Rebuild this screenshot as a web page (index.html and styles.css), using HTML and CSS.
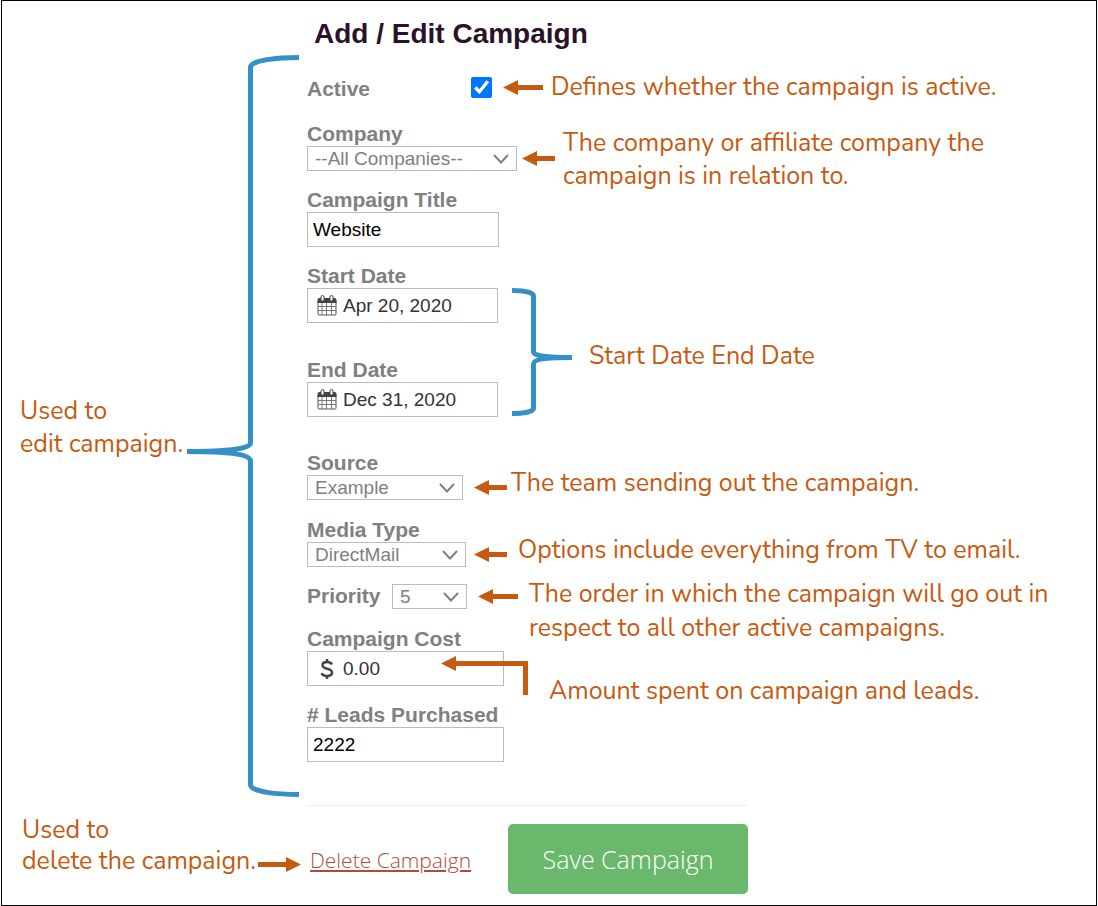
FILE: index.html
```html
<!DOCTYPE html>
<html lang="en">
<head>
<meta charset="utf-8">
<title>Add / Edit Campaign</title>
<link rel="stylesheet" href="styles.css">
</head>
<body>
<svg class="defs" aria-hidden="true">
  <symbol id="calendar" viewBox="0 0 20 21">
    <path d="M1 6V19Q1 20 2 20H18Q19 20 19 19V6Z" fill="none" stroke="#555" stroke-width="1"/>
    <path d="M.5 8V5Q.5 3 2.500 3H17.500Q19.500 3 19.500 5V8Z" fill="#444"/>
    <path d="M5 8V20M9.500 8V20M14.500 8V20M1 11.500H19M1 15.500H19" stroke="#777" stroke-width="1"/>
    <rect x="4" y=".5" width="3" height="5.500" rx="1.500" fill="#fff" stroke="#444"/>
    <rect x="13" y=".5" width="3" height="5.500" rx="1.500" fill="#fff" stroke="#444"/>
  </symbol>
</svg>
<form class="page">
  <h1 class="title">Add / Edit Campaign</h1>

  <div class="edit">
    <p class="note edit-note">Used to<br>edit campaign.</p>
    <svg class="brace" viewBox="0 0 112 742" preserveAspectRatio="none" aria-hidden="true">
      <path d="M112 2.500C92 2.500 63.500 5 63.500 12V388C63.500 394 40 396.500 0 396.500C40 396.500 63.500 399 63.500 406V730C63.500 737 92 739.500 112 739.500"/>
    </svg>

    <div class="fields">
      <div class="row active-row">
        <div class="active-field">
          <label for="active">Active</label>
          <input type="checkbox" id="active" class="check" checked>
        </div>
        <svg class="arrow long gap-l" viewBox="0 0 40 15" aria-hidden="true"><path d="M0 7.500L15 0V5H40V10H15V15Z"/></svg>
        <p class="note note-s">Defines whether the campaign is active.</p>
      </div>

      <div class="row">
        <div class="field">
          <label for="company">Company</label>
          <select id="company" class="select w-company"><option>--All Companies--</option></select>
        </div>
        <svg class="arrow gap-s" viewBox="0 0 33 15" aria-hidden="true"><path d="M0 7.500L15 0V5H33V10H15V15Z"/></svg>
        <p class="note note-s hang">The company or affiliate company the<br>campaign is in relation to.</p>
      </div>

      <div class="row">
        <div class="field">
          <label for="ctitle">Campaign Title</label>
          <input id="ctitle" class="box w-text" value="Website">
        </div>
      </div>

      <div class="dates">
        <div class="date-fields">
          <div class="field">
            <label for="start">Start Date</label>
            <div class="box icon-box w-date">
              <svg class="cal" aria-hidden="true"><use href="#calendar"/></svg>
              <input id="start" value="Apr 20, 2020">
            </div>
          </div>
          <div class="field">
            <label for="end">End Date</label>
            <div class="box icon-box w-date">
              <svg class="cal" aria-hidden="true"><use href="#calendar"/></svg>
              <input id="end" value="Dec 31, 2020">
            </div>
          </div>
        </div>
        <div class="dates-callout">
          <svg class="date-brace" viewBox="0 0 60 129" aria-hidden="true">
            <path d="M0 2.500C12 2.500 21.500 4 21.500 8V64C21.500 68 35 69.500 60 69.500C35 69.500 21.500 71 21.500 76V120C21.500 124 12 125.500 0 125.500"/>
          </svg>
          <p class="note">Start Date End Date</p>
        </div>
      </div>

      <div class="row">
        <div class="field">
          <label for="source">Source</label>
          <select id="source" class="select w-source"><option>Example</option></select>
        </div>
        <svg class="arrow gap-l" viewBox="0 0 33 15" aria-hidden="true"><path d="M0 7.500L15 0V5H33V10H15V15Z"/></svg>
        <p class="note note-xs">The team sending out the campaign.</p>
      </div>

      <div class="row media-row">
        <div class="field">
          <label for="media">Media Type</label>
          <select id="media" class="select w-media"><option>DirectMail</option></select>
        </div>
        <svg class="arrow gap-m" viewBox="0 0 33 15" aria-hidden="true"><path d="M0 7.500L15 0V5H33V10H15V15Z"/></svg>
        <p class="note note-m">Options include everything from TV to email.</p>
      </div>

      <div class="row priority-row">
        <label for="priority">Priority</label>
        <select id="priority" class="select w-priority"><option>5</option></select>
        <svg class="arrow long gap-l" viewBox="0 0 40 15" aria-hidden="true"><path d="M0 7.500L15 0V5H40V10H15V15Z"/></svg>
        <p class="note note-m priority-note">The order in which the campaign will go out in<br>respect to all other active campaigns.</p>
      </div>

      <div class="row">
        <div class="field cost-field">
          <label for="cost">Campaign Cost</label>
          <div class="box icon-box w-cost">
            <svg class="dollar" viewBox="0 0 14 22" aria-hidden="true"><path d="M12 6.500C11 4.500 9 4 7 4C4.500 4 2.500 5 2.500 7.200C2.500 12 12 9.500 12 14.500C12 17 9.500 18 7 18C4.500 18 2.500 17.200 1.500 15.200M7 1V4M7 18V21"/></svg>
            <input id="cost" value="0.00">
          </div>
          <svg class="elbow" viewBox="0 0 87 39" aria-hidden="true"><path d="M0 7.500L15 0V5H87V39H82V10H15V15Z"/></svg>
        </div>
        <p class="note hang cost-note">Amount spent on campaign and leads.</p>
      </div>

      <div class="row">
        <div class="field">
          <label for="leads"># Leads Purchased</label>
          <input id="leads" class="box w-cost" value="2222">
        </div>
      </div>
    </div>
  </div>

  <div class="footer">
    <div class="delete-callout">
      <p class="note">Used to<br>delete the campaign.</p>
      <svg class="arrow right" viewBox="0 0 43 15" aria-hidden="true"><path d="M43 7.500L28 0V5H0V10H28V15Z"/></svg>
    </div>
    <div class="actions">
      <a href="#" class="delete">Delete Campaign</a>
      <button type="button" class="save">Save Campaign</button>
    </div>
  </div>
</form>
</body>
</html>
```
FILE: styles.css
```css
* { box-sizing: border-box; }

body {
  margin: 0;
  background: #fff;
  font-family: "Liberation Sans", Arial, sans-serif;
  font-size: 19px;
}

.defs { display: none; }

.page {
  min-height: 100vh;
  margin: 0 1px;
  border: 1px solid #000;
}

.title {
  margin: 0;
  padding: 16px 0 4px 312px;
  font-size: 28px;
  line-height: 34px;
  color: #2a1228;
}

label {
  font-size: 21px;
  font-weight: bold;
  line-height: 24px;
  color: #808080;
}

.note {
  margin: 0;
  font-family: Nunito, Lato, sans-serif;
  font-size: 25px;
  line-height: 33px;
  color: #c55a11;
  white-space: nowrap;
}

.edit {
  display: flex;
  align-items: center;
}

.edit-note {
  width: 185px;
  padding: 4px 0 0 18px;
}

.brace {
  flex: none;
  align-self: stretch;
  width: 112px;
  height: auto;
}

.brace path, .date-brace path {
  fill: none;
  stroke: #3590c8;
  stroke-width: 5px;
}

.fields {
  display: flex;
  flex-direction: column;
  gap: 17px;
  padding: 16px 0 35px 8px;
}

.row {
  display: flex;
  align-items: flex-end;
}

.active-row {
  align-items: center;
  margin-bottom: 1px;
}

.active-row label { padding-top: 3px; }

.active-field {
  display: flex;
  align-items: center;
  justify-content: space-between;
  width: 185px;
}

.check {
  width: 21px;
  height: 21px;
  margin: 0;
  accent-color: #0075ff;
}

.field {
  display: flex;
  flex-direction: column;
}

.select {
  appearance: none;
  height: 25px;
  margin: 0;
  padding: 0 7px;
  border: 1px solid #bbb;
  border-radius: 0;
  background: #fff url("data:image/svg+xml,%3Csvg xmlns='http://www.w3.org/2000/svg' width='16' height='10'%3E%3Cpath d='M1 1L8 8.500L15 1' fill='none' stroke='%23808080' stroke-width='2'/%3E%3C/svg%3E") no-repeat right 7px center;
  font: inherit;
  color: #808080;
}

.box {
  height: 35px;
  margin: 0;
  padding: 0 5px;
  border: 1px solid #bbb;
  background: #fff;
  font: inherit;
  color: #000;
}

.icon-box {
  display: flex;
  align-items: center;
  gap: 6px;
  padding: 0 9px;
}

.icon-box input {
  width: 100%;
  min-width: 0;
  padding: 0;
  border: 0;
  background: none;
  font: inherit;
  color: #333;
}

.cal {
  flex: none;
  width: 20px;
  height: 21px;
}

.dollar {
  flex: none;
  width: 20px;
  height: 22px;
  fill: none;
  stroke: #444;
  stroke-width: 2.500px;
}

.w-company { width: 210px; }
.w-text { width: 192px; }
.w-date { width: 191px; }
.w-source { width: 156px; }
.w-media { width: 159px; }
.w-priority { width: 75px; }
.w-cost { width: 197px; }

.arrow {
  flex: none;
  width: 33px;
  height: 25px;
  fill: #c55a11;
}

.arrow.long { width: 40px; }
.arrow.right { width: 43px; }

.gap-s { margin-left: 5px; }
.gap-m { margin-left: 8px; }
.gap-l { margin-left: 11px; }

.note-xs { margin-left: 4px; }
.note-s { margin-left: 8px; }
.note-m { margin-left: 11px; }
.hang { margin-bottom: -22px; }

.dates {
  display: flex;
  align-items: flex-end;
  margin-bottom: 17px;
}

.date-fields {
  display: flex;
  flex-direction: column;
  gap: 35px;
}

.dates-callout {
  display: flex;
  align-items: center;
  gap: 17px;
  margin-left: 14px;
}

.dates-callout .note { padding-top: 8px; }

.date-brace {
  width: 60px;
  height: 129px;
}

.media-row { margin-top: 1px; }

.priority-row {
  align-items: flex-start;
  margin-bottom: 1px;
}

.priority-row label { width: 85px; }

.priority-note {
  margin-top: -7px;
  margin-bottom: -36px;
  line-height: 34px;
}

.cost-field { position: relative; }

.elbow {
  position: absolute;
  top: 29px;
  left: 134px;
  width: 87px;
  height: 39px;
  fill: #c55a11;
}

.cost-note { margin-left: 45px; }

.footer {
  display: flex;
  margin-top: 8px;
}

.delete-callout {
  display: flex;
  align-items: flex-end;
  align-self: flex-start;
  width: 305px;
  padding: 10px 6px 0 20px;
  justify-content: space-between;
}

.delete-callout .note { line-height: 31px; }

.actions {
  display: flex;
  align-items: center;
  justify-content: space-between;
  width: 441px;
  padding: 18px 0 10px 3px;
  border-top: 1px solid #eee;
  font-family: "Open Sans", sans-serif;
  font-weight: 300;
}

.delete {
  padding-top: 2px;
  font-size: 21px;
  color: #b04a3a;
}

.save {
  width: 240px;
  height: 70px;
  border: 0;
  border-radius: 5px;
  background: #6ab86c;
  font: inherit;
  font-size: 25px;
  color: #fff;
}
```
